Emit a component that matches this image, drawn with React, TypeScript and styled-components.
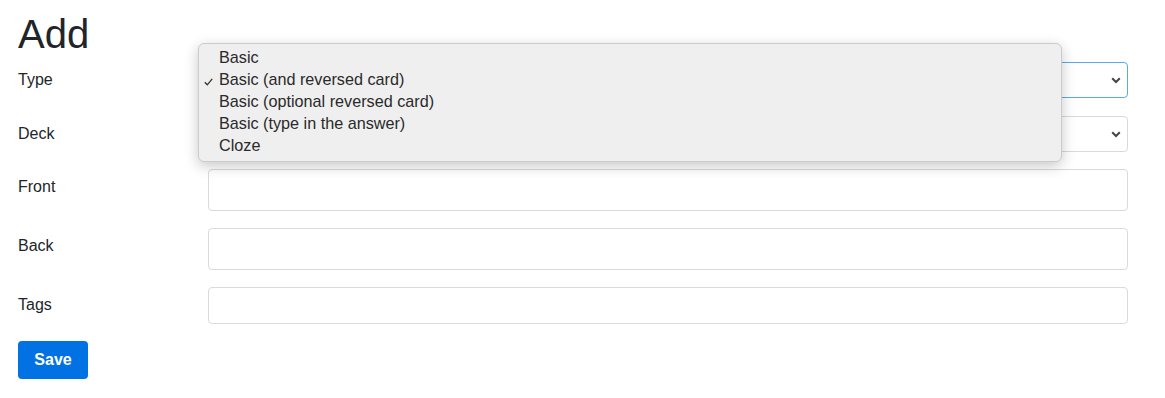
import * as React from 'react';
import styled, { createGlobalStyle } from 'styled-components';

const GlobalStyle = createGlobalStyle`
  html, body {
    margin: 0;
    padding: 0;
    background: #ffffff;
  }

  body {
    font-family: 'Liberation Sans', Arial, Helvetica, sans-serif;
    color: #212529;
  }
`;

const Page = styled.div`
  position: relative;
  width: 1110px;
  padding: 10px 37px 0 18px;
`;

const Title = styled.h1`
  margin: 0 0 4px;
  font-size: 40px;
  font-weight: 400;
  line-height: 48px;
  color: #212529;
`;

const Form = {
  Container: styled.form`
    display: flex;
    flex-direction: column;
    gap: 17px;
  `,

  Row: styled.div<{ $gapBelow?: number }>`
    display: grid;
    grid-template-columns: 190px 920px;
    margin-bottom: ${(p) => p.$gapBelow ?? 0}px;
  `,

  Label: styled.label`
    padding-top: 6px;
    font-size: 16px;
    line-height: 24px;
    color: #212529;
  `,
};

const Field = {
  Select: styled.div<{ $focused?: boolean }>`
    display: flex;
    align-items: center;
    justify-content: flex-end;
    box-sizing: border-box;
    height: 36px;
    padding-right: 6px;
    border: 1px solid ${(p) => (p.$focused ? '#5aa7f2' : '#d9d9d9')};
    border-radius: 4px;
    background: #fff;
  `,

  Input: styled.div<{ $height: number }>`
    box-sizing: border-box;
    height: ${(p) => p.$height}px;
    border: 1px solid #dadada;
    border-radius: 4px;
    background: #fff;
  `,
};

const SaveButton = styled.button`
  align-self: flex-start;
  box-sizing: border-box;
  width: 70px;
  height: 38px;
  padding: 0;
  border: none;
  border-radius: 4px;
  background: #0271e3;
  color: #fff;
  font-family: 'Liberation Sans', Arial, sans-serif;
  font-size: 16px;
  font-weight: 700;
`;

const Menu = {
  Container: styled.ul`
    position: absolute;
    top: 43px;
    left: 198px;
    box-sizing: border-box;
    width: 864px;
    height: 119px;
    margin: 0;
    padding: 2px 0 7px;
    list-style: none;
    background: #efefef;
    border: 1px solid #cbcbcb;
    border-radius: 6px;
    box-shadow: 0 4px 14px rgba(0, 0, 0, 0.22);
  `,

  Item: styled.li`
    position: relative;
    height: 22px;
    padding-left: 20px;
    font-size: 16.2px;
    line-height: 22px;
    color: #2a2a2a;
  `,

  Check: styled.svg`
    position: absolute;
    left: 5px;
    top: 10px;
  `,
};

const Chevron = () => (
  <svg width="10" height="7" viewBox="0 0 10 7">
    <path d="M1.2 1.3 L5 5 L8.8 1.3" fill="none" stroke="#454545" strokeWidth="2" />
  </svg>
);

const types = [
  'Basic',
  'Basic (and reversed card)',
  'Basic (optional reversed card)',
  'Basic (type in the answer)',
  'Cloze',
];

const App = () => {
  const selected = 1;

  return (
    <Page>
      <GlobalStyle />
      <Title>Add</Title>

      <Form.Container>
        <Form.Row $gapBelow={1}>
          <Form.Label>Type</Form.Label>
          <Field.Select $focused>
            <Chevron />
          </Field.Select>
        </Form.Row>

        <Form.Row>
          <Form.Label>Deck</Form.Label>
          <Field.Select>
            <Chevron />
          </Field.Select>
        </Form.Row>

        <Form.Row>
          <Form.Label>Front</Form.Label>
          <Field.Input $height={42} />
        </Form.Row>

        <Form.Row>
          <Form.Label>Back</Form.Label>
          <Field.Input $height={42} />
        </Form.Row>

        <Form.Row>
          <Form.Label>Tags</Form.Label>
          <Field.Input $height={37} />
        </Form.Row>

        <SaveButton type="button">Save</SaveButton>
      </Form.Container>

      <Menu.Container>
        {types.map((t, i) => (
          <Menu.Item key={t}>
            {i === selected && (
              <Menu.Check width="9" height="8" viewBox="0 0 9 8">
                <path d="M0.8 4.2 L3.3 6.8 L8.2 0.8" fill="none" stroke="#333" strokeWidth="1.3" />
              </Menu.Check>
            )}
            {t}
          </Menu.Item>
        ))}
      </Menu.Container>
    </Page>
  );
};

export default App;
